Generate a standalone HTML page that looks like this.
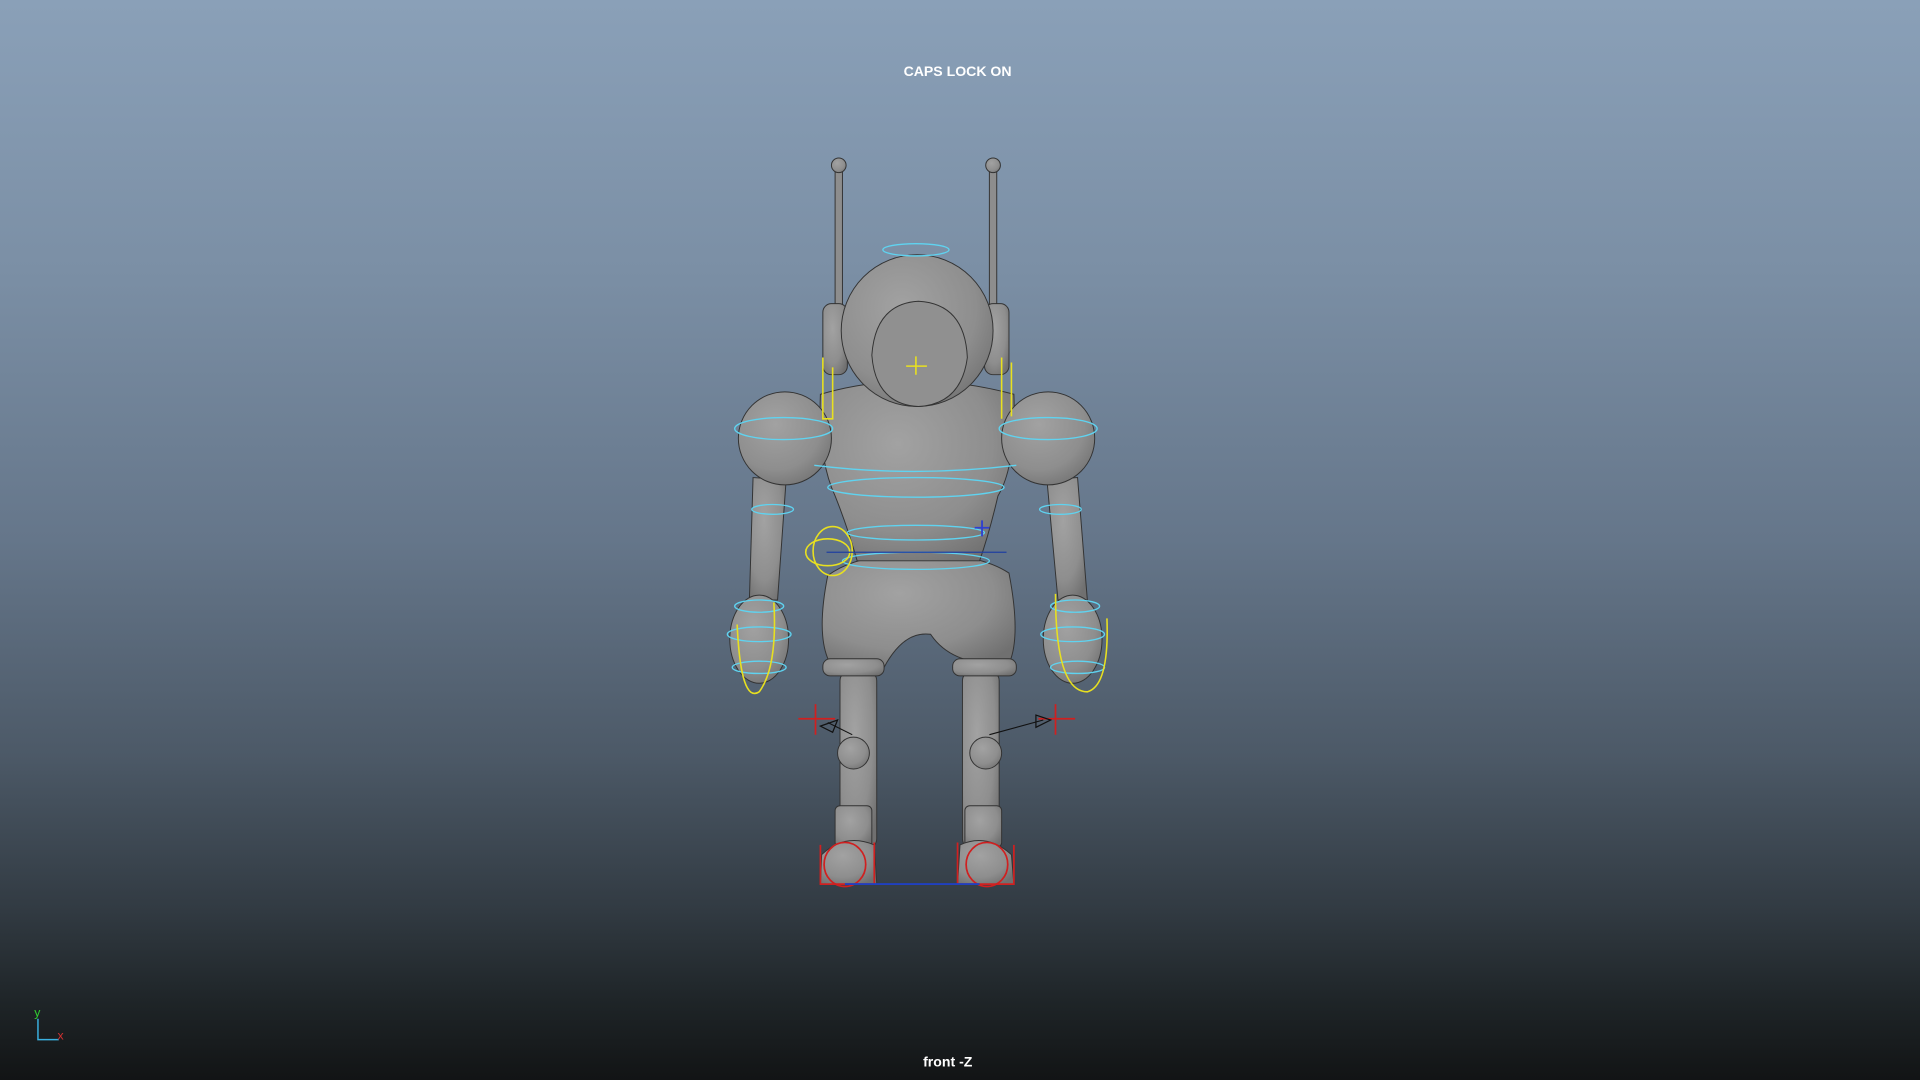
<!DOCTYPE html>
<html><head><style>
html,body{margin:0;padding:0;width:1920px;height:1080px;overflow:hidden}
body{background:linear-gradient(to bottom,#8aa0b8 0%,#7b8fa5 25%,#65768a 50%,#4c5967 70%,#323b43 84%,#1e2427 93%,#121415 100%)}
svg{position:absolute;left:0;top:0}
</style></head><body>
<svg width="1920" height="1080" viewBox="0 0 1568 882" xmlns="http://www.w3.org/2000/svg">
<defs>
<radialGradient id="g" cx="40%" cy="35%" r="75%"><stop offset="0" stop-color="#a2a2a2"/><stop offset="0.65" stop-color="#8e8e8e"/><stop offset="1" stop-color="#707070"/></radialGradient>
</defs>
<g fill="url(#g)" stroke="#333" stroke-width="0.8">
<rect x="682" y="136" width="6" height="130" fill="#8d8d8d"/>
<rect x="808" y="136" width="6" height="130" fill="#8d8d8d"/>
<circle cx="685" cy="135" r="6"/><circle cx="811" cy="135" r="6"/>
<rect x="686" y="548" width="30" height="145" rx="8"/>
<rect x="786" y="548" width="30" height="145" rx="8"/>
<circle cx="697" cy="615" r="13"/><circle cx="805" cy="615" r="13"/>
<rect x="682" y="658" width="30" height="34" rx="4"/><rect x="788" y="658" width="30" height="34" rx="4"/>
<path d="M670 722 L671 698 Q690 680 714 690 L716 722 Z"/>
<path d="M782 722 L784 690 Q806 680 826 698 L828 722 Z"/>
<path d="M615 390 L642 392 L635 490 L612 490 Z"/>
<path d="M855 392 L880 390 L888 490 L864 490 Z"/>
<ellipse cx="620" cy="522" rx="24" ry="36"/>
<ellipse cx="876" cy="522" rx="24" ry="36"/>
<path d="M676 470 Q666 520 678 542 L722 545 Q738 515 760 518 Q778 545 824 542 Q834 520 824 468 Q800 452 750 452 Q700 452 676 470 Z"/>
<rect x="672" y="538" width="50" height="14" rx="6"/><rect x="778" y="538" width="52" height="14" rx="6"/>
<path d="M670 322 Q745 300 828 322 Q830 380 815 405 Q808 435 800 458 L700 458 Q692 430 682 405 Q668 375 670 322 Z"/>
<circle cx="641" cy="358" r="38"/><circle cx="856" cy="358" r="38"/>
<rect x="672" y="248" width="20" height="58" rx="7"/>
<rect x="804" y="248" width="20" height="58" rx="7"/>
<circle cx="749" cy="270" r="62"/>
<path d="M712 290 Q715 248 750 246 Q788 248 790 292 Q785 330 750 332 Q715 330 712 290 Z" fill="#909090"/>
</g>
<g fill="none" stroke="#5fd3f0" stroke-width="1.1">
<ellipse cx="748" cy="204" rx="27" ry="5"/>
<ellipse cx="640" cy="350" rx="40" ry="9"/><ellipse cx="856" cy="350" rx="40" ry="9"/>
<path d="M665 380 Q745 390 830 380"/>
<ellipse cx="748" cy="398" rx="72" ry="8"/>
<ellipse cx="748" cy="435" rx="56" ry="6"/>
<ellipse cx="748" cy="458" rx="60" ry="7"/>
<ellipse cx="631" cy="416" rx="17" ry="4"/><ellipse cx="866" cy="416" rx="17" ry="4"/>
<ellipse cx="620" cy="495" rx="20" ry="5"/><ellipse cx="620" cy="518" rx="26" ry="6"/><ellipse cx="620" cy="545" rx="22" ry="5"/>
<ellipse cx="878" cy="495" rx="20" ry="5"/><ellipse cx="876" cy="518" rx="26" ry="6"/><ellipse cx="880" cy="545" rx="22" ry="5"/>
</g>
<g fill="none" stroke="#e8e020" stroke-width="1.3">
<path d="M672 292 V342 H680 V300"/><path d="M818 292 V342 M826 296 V340"/>
<path d="M740 299 H757 M748 291 V306"/>
<ellipse cx="680" cy="450" rx="16" ry="20"/><ellipse cx="676" cy="451" rx="18" ry="11"/>
<path d="M602 510 Q605 575 620 565 Q635 545 632 492"/>
<path d="M862 485 Q862 565 888 565 Q906 560 904 505"/>
</g>
<g fill="none" stroke="#d02020" stroke-width="1.4">
<path d="M652 587 H682 M666 575 V600"/><path d="M848 587 H878 M862 575 V600"/>
<ellipse cx="690" cy="706" rx="17" ry="18"/><ellipse cx="806" cy="706" rx="17" ry="18"/>
<path d="M670 690 V722 H714 V688 M782 688 V722 H828 V690"/>
</g>
<g stroke="#111" stroke-width="0.9" fill="none"><path d="M676 590 L696 600 M808 600 L852 588"/></g>
<path d="M670 593 L684 588 L680 598 Z" fill="none" stroke="#111"/>
<path d="M846 584 L858 588 L846 594 Z" fill="none" stroke="#111"/>
<path d="M675 451 H822" stroke="#2040a0" stroke-width="1"/>
<path d="M690 722 H800" stroke="#2040c0" stroke-width="1.5"/>
<path d="M802 425 V438 M796 431 H808" stroke="#3040d0" stroke-width="1.5"/>
<path d="M31 832 V849 H48" stroke="#3ab0e0" stroke-width="1.2" fill="none"/>
<text x="28" y="830" fill="#30d030" font-family="Liberation Sans,sans-serif" font-size="10">y</text>
<text x="47" y="849" fill="#d03030" font-family="Liberation Sans,sans-serif" font-size="10">x</text>
<text x="782" y="62" fill="#fff" font-family="Liberation Sans,sans-serif" font-weight="bold" font-size="11.5" text-anchor="middle">CAPS LOCK ON</text>
<text x="774" y="871" fill="#fff" font-family="Liberation Sans,sans-serif" font-weight="bold" font-size="11.5" text-anchor="middle">front -Z</text>
</svg>
</body></html>
